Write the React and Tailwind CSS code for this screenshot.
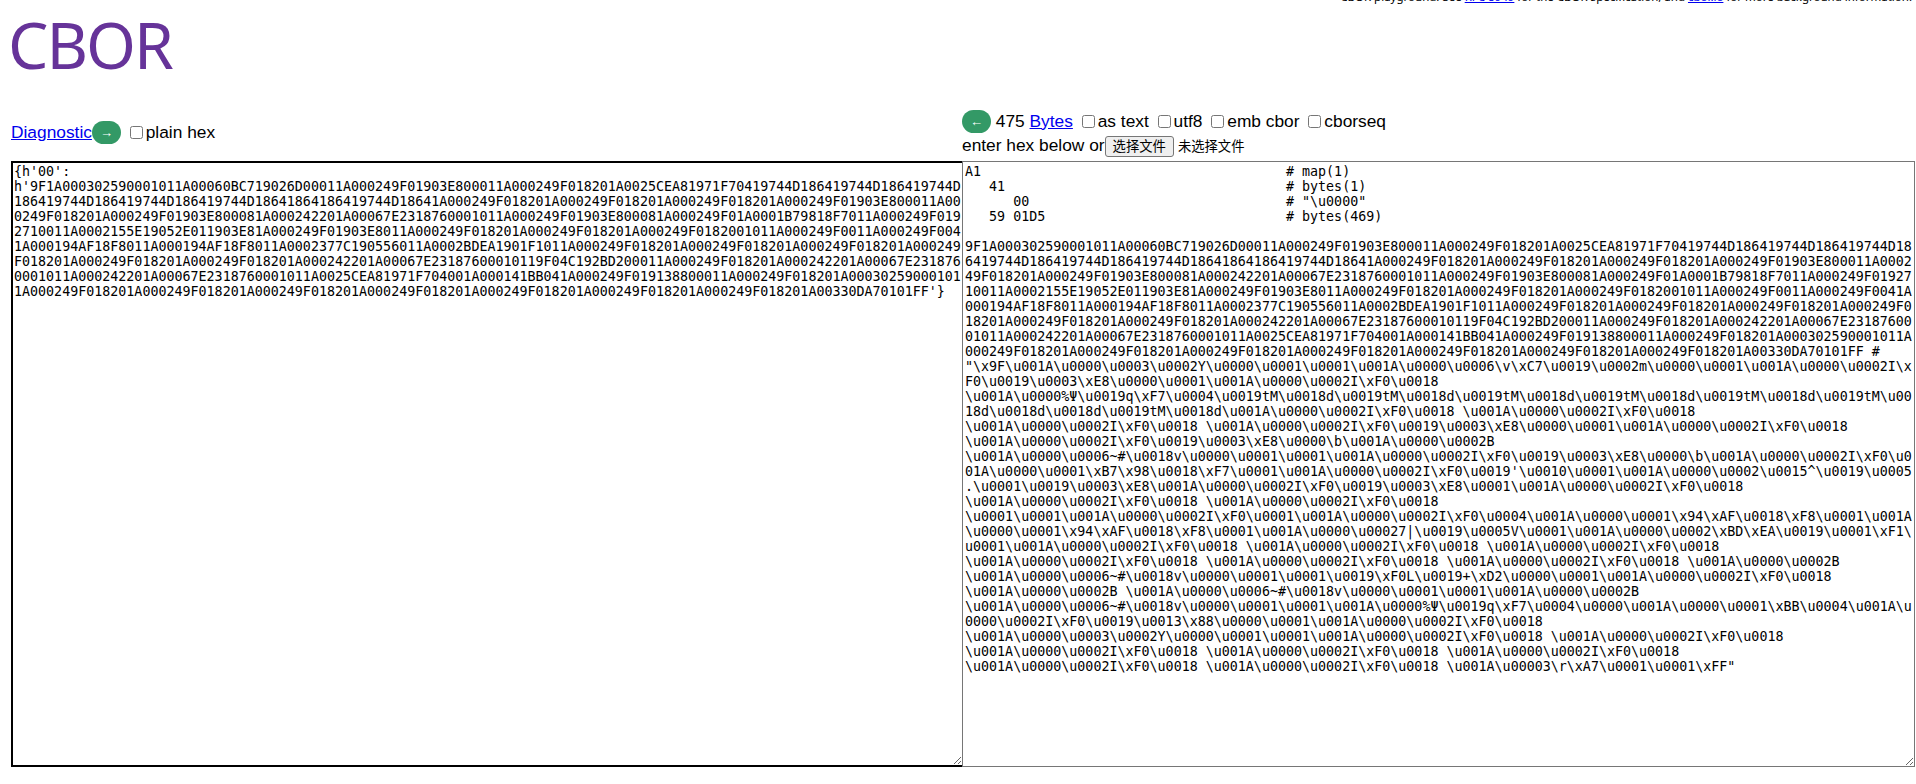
import React from "react";

const hex =
  "9F1A000302590001011A00060BC719026D00011A000249F01903E800011A000249F018201A0025CEA81971F70419744D186419744D186419744D186419744D186419744D186419744D18641864186419744D18641A000249F018201A000249F018201A000249F018201A000249F01903E800011A000249F018201A000249F01903E800081A000242201A00067E2318760001011A000249F01903E800081A000249F01A0001B79818F7011A000249F0192710011A0002155E19052E011903E81A000249F01903E8011A000249F018201A000249F018201A000249F0182001011A000249F0011A000249F0041A000194AF18F8011A000194AF18F8011A0002377C190556011A0002BDEA1901F1011A000249F018201A000249F018201A000249F018201A000249F018201A000249F018201A000249F018201A000242201A00067E23187600010119F04C192BD200011A000249F018201A000242201A00067E2318760001011A000242201A00067E2318760001011A0025CEA81971F704001A000141BB041A000249F019138800011A000249F018201A000302590001011A000249F018201A000249F018201A000249F018201A000249F018201A000249F018201A000249F018201A000249F018201A00330DA70101FF";

const diagText = `{h'00':\nh'${hex}'}`;

const decoded = String.raw`"\x9F\u001A\u0000\u0003\u0002Y\u0000\u0001\u0001\u001A\u0000\u0006\v\xC7\u0019\u0002m\u0000\u0001\u001A\u0000\u0002I\xF0\u0019\u0003\xE8\u0000\u0001\u001A\u0000\u0002I\xF0\u0018 \u001A\u0000%Ψ\u0019q\xF7\u0004\u0019tM\u0018d\u0019tM\u0018d\u0019tM\u0018d\u0019tM\u0018d\u0019tM\u0018d\u0019tM\u0018d\u0018d\u0018d\u0019tM\u0018d\u001A\u0000\u0002I\xF0\u0018 \u001A\u0000\u0002I\xF0\u0018 \u001A\u0000\u0002I\xF0\u0018 \u001A\u0000\u0002I\xF0\u0019\u0003\xE8\u0000\u0001\u001A\u0000\u0002I\xF0\u0018 \u001A\u0000\u0002I\xF0\u0019\u0003\xE8\u0000\b\u001A\u0000\u0002B \u001A\u0000\u0006~#\u0018v\u0000\u0001\u0001\u001A\u0000\u0002I\xF0\u0019\u0003\xE8\u0000\b\u001A\u0000\u0002I\xF0\u001A\u0000\u0001\xB7\x98\u0018\xF7\u0001\u001A\u0000\u0002I\xF0\u0019'\u0010\u0001\u001A\u0000\u0002\u0015^\u0019\u0005.\u0001\u0019\u0003\xE8\u001A\u0000\u0002I\xF0\u0019\u0003\xE8\u0001\u001A\u0000\u0002I\xF0\u0018 \u001A\u0000\u0002I\xF0\u0018 \u001A\u0000\u0002I\xF0\u0018 \u0001\u0001\u001A\u0000\u0002I\xF0\u0001\u001A\u0000\u0002I\xF0\u0004\u001A\u0000\u0001\x94\xAF\u0018\xF8\u0001\u001A\u0000\u0001\x94\xAF\u0018\xF8\u0001\u001A\u0000\u00027|\u0019\u0005V\u0001\u001A\u0000\u0002\xBD\xEA\u0019\u0001\xF1\u0001\u001A\u0000\u0002I\xF0\u0018 \u001A\u0000\u0002I\xF0\u0018 \u001A\u0000\u0002I\xF0\u0018 \u001A\u0000\u0002I\xF0\u0018 \u001A\u0000\u0002I\xF0\u0018 \u001A\u0000\u0002I\xF0\u0018 \u001A\u0000\u0002B \u001A\u0000\u0006~#\u0018v\u0000\u0001\u0001\u0019\xF0L\u0019+\xD2\u0000\u0001\u001A\u0000\u0002I\xF0\u0018 \u001A\u0000\u0002B \u001A\u0000\u0006~#\u0018v\u0000\u0001\u0001\u001A\u0000\u0002B \u001A\u0000\u0006~#\u0018v\u0000\u0001\u0001\u001A\u0000%Ψ\u0019q\xF7\u0004\u0000\u001A\u0000\u0001\xBB\u0004\u001A\u0000\u0002I\xF0\u0019\u0013\x88\u0000\u0001\u001A\u0000\u0002I\xF0\u0018 \u001A\u0000\u0003\u0002Y\u0000\u0001\u0001\u001A\u0000\u0002I\xF0\u0018 \u001A\u0000\u0002I\xF0\u0018 \u001A\u0000\u0002I\xF0\u0018 \u001A\u0000\u0002I\xF0\u0018 \u001A\u0000\u0002I\xF0\u0018 \u001A\u0000\u0002I\xF0\u0018 \u001A\u0000\u0002I\xF0\u0018 \u001A\u00003\r\xA7\u0001\u0001\xFF"`;

const prettyText =
  "A1                                      # map(1)\n" +
  "   41                                   # bytes(1)\n" +
  "      00                                # \"\\u0000\"\n" +
  "   59 01D5                              # bytes(469)\n" +
  "\n" +
  hex +
  " # " +
  decoded;

const Check = ({ label }) => (
  <label className="inline-flex items-center">
    <input type="checkbox" className="m-[3px_3px_3px_4px] h-[13px] w-[13px]" />
    {label}
  </label>
);

const GoButton = ({ children }) => (
  <button className="h-[23px] w-[29px] rounded-[12px] bg-[#339966] text-[13px] leading-none text-white">
    {children}
  </button>
);

export default function App() {
  return (
    <div className="h-[784px] overflow-hidden bg-white font-['Liberation_Sans',sans-serif] text-[17.33px] text-black">
      <p className="-mt-[11px] h-[16px] pr-[4px] text-right font-['Noto_Sans',sans-serif] text-[11.5px] leading-[16px]">
        CBOR playground. See{" "}
        <a href="#" className="text-[#0000ee] underline">RFC 8949</a> for the CBOR specification, and{" "}
        <a href="#" className="text-[#0000ee] underline">cbor.io</a> for more background information.
      </p>
      <h1 className="-mt-[4px] h-[87px] pl-[8px] font-['Noto_Sans',sans-serif] text-[64px] leading-[87px] tracking-[-2px] text-[#663399]">
        CBOR
      </h1>
      <div className="mt-[22px] grid grid-cols-[962px_954px]">
        <div className="pl-[11px] pt-[11px]">
          <div className="flex h-[23px] items-center gap-[4.82px]">
            <div className="flex items-center">
              <a href="#" className="text-[#0000ee] underline">Diagnostic</a>
              <GoButton>→</GoButton>
            </div>
            <Check label="plain hex" />
          </div>
        </div>
        <div>
          <div className="flex h-[23px] items-center gap-[4.82px]">
            <GoButton>←</GoButton>
            <span>
              475 <a href="#" className="text-[#0000ee] underline">Bytes</a>
            </span>
            <Check label="as text" />
            <Check label="utf8" />
            <Check label="emb cbor" />
            <Check label="cborseq" />
          </div>
          <div className="mt-[3px] flex h-[20px] items-center">
            enter hex below or
            <button className="h-[21px] rounded-[3px] border border-[#767676] bg-[#efefef] px-[7px] font-['Noto_Sans_CJK_SC',sans-serif] text-[13.33px] leading-none">
              选择文件
            </button>
            <span className="ml-[4px] font-['Noto_Sans_CJK_SC',sans-serif] text-[13.33px]">未选择文件</span>
          </div>
        </div>
      </div>
      <div className="mt-[5px] grid grid-cols-[951px_953px] pl-[11px]">
        <textarea
          defaultValue={diagText}
          readOnly
          className="block h-[606px] w-[953px] border-2 border-black py-[1px] pl-[1px] pr-0 font-['DejaVu_Sans_Mono',monospace] text-[13.33px] leading-[15px]"
        />
        <textarea
          defaultValue={prettyText}
          readOnly
          className="relative block h-[606px] border border-[#767676] bg-white p-[2px] font-['DejaVu_Sans_Mono',monospace] text-[13.33px] leading-[15px]"
        />
      </div>
    </div>
  );
}
